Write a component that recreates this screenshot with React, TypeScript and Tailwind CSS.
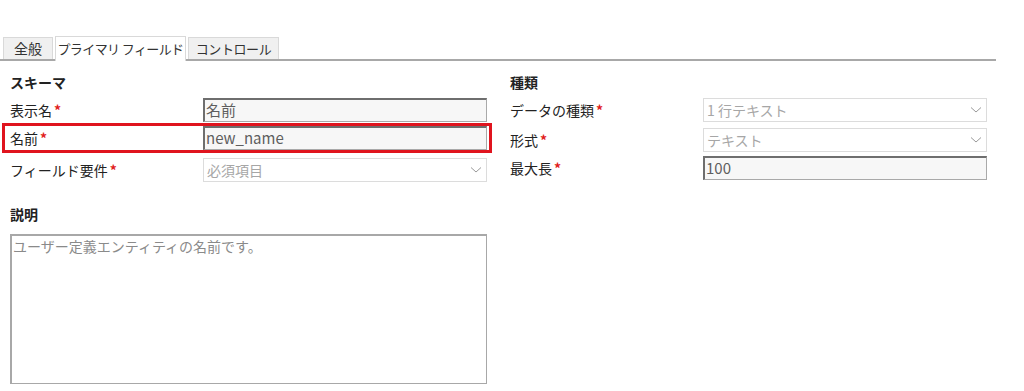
import React from "react";

const Star = () => <span className="text-[#e11d21] ml-[2px] font-bold">*</span>;

const Chevron = () => (
  <svg width="12" height="8" viewBox="0 0 12 8" className="mr-[4px]">
    <path d="M1 1.5 L6 6 L11 1.5" fill="none" stroke="#9a9a9a" strokeWidth="1" />
  </svg>
);

const TextBox = ({ value }: { value: string }) => (
  <div className="h-[24px] w-[284px] bg-[#f7f7f7] border border-[#a9a9a9] border-t-2 border-l-2 border-t-[#6e6e6e] border-l-[#6e6e6e] flex items-center pl-[1px] text-[15px] text-[#5e5e5e]">
    {value}
  </div>
);

const Select = ({ value }: { value: string }) => (
  <div className="h-[24px] w-[284px] bg-white border border-[#dcdcdc] flex items-center justify-between pl-[3px] text-[14px] text-[#a6a6a6]">
    <span>{value}</span>
    <Chevron />
  </div>
);

export default function App() {
  return (
    <div
      className="w-[1024px] h-[391px] bg-white text-[#222] overflow-hidden"
      style={{ fontFamily: '"Noto Sans CJK JP", "Noto Sans", sans-serif' }}
    >
      <div className="h-[37px]" />
      {/* Tabs */}
      <div className="flex items-end w-[996px] border-b-2 border-[#a8a8a8] h-[24px] pl-[3px] gap-[2px]">
        <div className="h-[22px] w-[50px] shrink-0 whitespace-nowrap bg-[#f0f0f0] border border-[#d9d9d9] border-b-0 flex items-center justify-center text-[14px] text-[#333]">
          全般
        </div>
        <div className="h-[25px] w-[131px] shrink-0 -mb-[2px] whitespace-nowrap bg-white border border-[#d9d9d9] border-b-0 flex items-center justify-center text-[13px] tracking-[-0.6px] text-[#333]">
          プライマリ フィールド
        </div>
        <div className="h-[22px] w-[91px] shrink-0 whitespace-nowrap bg-[#f0f0f0] border border-[#d9d9d9] border-b-0 flex items-center justify-center text-[13px] tracking-[-0.4px] text-[#333]">
          コントロール
        </div>
      </div>

      <div className="flex mt-[10px]">
        {/* Left column */}
        <div className="w-[500px] pl-[10px]">
          <div className="text-[14px] font-bold h-[22px] leading-[22px]">スキーマ</div>
          <div className="mt-[5px] flex items-center h-[24px]">
            <div className="w-[193px] text-[14px]">
              表示名<Star />
            </div>
            <TextBox value="名前" />
          </div>
          <div className="-ml-[8px] mt-[1px] w-[490px] h-[30px] border-[3px] border-[#e0141e] flex items-end pl-[5px]">
            <div className="w-[193px] text-[14px] self-center">
              名前<Star />
            </div>
            <TextBox value="new_name" />
          </div>
          <div className="mt-[5px] flex items-center h-[24px]">
            <div className="w-[193px] text-[14px]">
              フィールド要件<Star />
            </div>
            <Select value="必須項目" />
          </div>
          <div className="mt-[21px] text-[14px] font-bold h-[22px] leading-[22px]">説明</div>
          <div className="mt-[9px] w-[477px] h-[150px] border-2 border-[#a8a8a8] border-r border-b text-[14px] text-[#8a8a8a] pl-[1px] leading-[20px]">
            ユーザー定義エンティティの名前です。
          </div>
        </div>

        {/* Right column */}
        <div className="pl-[10px]">
          <div className="text-[14px] font-bold h-[22px] leading-[22px]">種類</div>
          <div className="mt-[5px] flex items-center h-[24px]">
            <div className="w-[193px] text-[14px]">
              データの種類<Star />
            </div>
            <Select value="1 行テキスト" />
          </div>
          <div className="mt-[6px] flex items-center h-[24px]">
            <div className="w-[193px] text-[14px]">
              形式<Star />
            </div>
            <Select value="テキスト" />
          </div>
          <div className="mt-[4px] flex items-center h-[24px]">
            <div className="w-[193px] text-[14px]">
              最大長<Star />
            </div>
            <TextBox value="100" />
          </div>
        </div>
      </div>
    </div>
  );
}
